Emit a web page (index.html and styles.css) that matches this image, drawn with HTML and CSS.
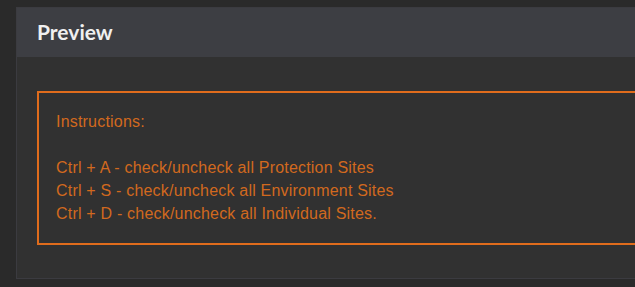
FILE: index.html
```html
<!DOCTYPE html>
<html lang="en">

<head>
    <meta charset="UTF-8">
    <meta name="viewport" content="width=device-width, initial-scale=1.0">
    <title>Preview</title>
    <link rel="stylesheet" href="styles.css">
</head>

<body>
    <div class="panel">
        <div class="panel-heading">Preview</div>
        <div class="panel-body">
            <div class="instructions">
                Instructions:<br><br>
                Ctrl + A - check/uncheck all Protection Sites<br>
                Ctrl + S - check/uncheck all Environment Sites<br>
                Ctrl + D - check/uncheck all Individual Sites.
            </div>
        </div>
    </div>
</body>

</html>
```

FILE: styles.css
```css
body {
    margin: 0;
    padding: 7px 0 0 16px;
    background-color: #2a2a2a;
    font-family: "Liberation Sans", Arial, sans-serif;
    overflow: hidden;
}

.panel {
    width: 640px;
    border: 1px solid #3b3b40;
    background-color: #313131;
}

.panel-heading {
    height: 49px;
    box-sizing: border-box;
    padding: 11px 20px 0;
    background-color: #3d3e43;
    color: #f0f0f0;
    font-family: Lato, sans-serif;
    font-size: 21px;
    font-weight: bold;
}

.panel-body {
    padding: 34px 0 33px 20px;
}

.instructions {
    border: 2px solid #e06c1c;
    padding: 17px 17px 18px;
    color: #d2691e;
    font-size: 16px;
    line-height: 23px;
    letter-spacing: 0.2px;
}
```
